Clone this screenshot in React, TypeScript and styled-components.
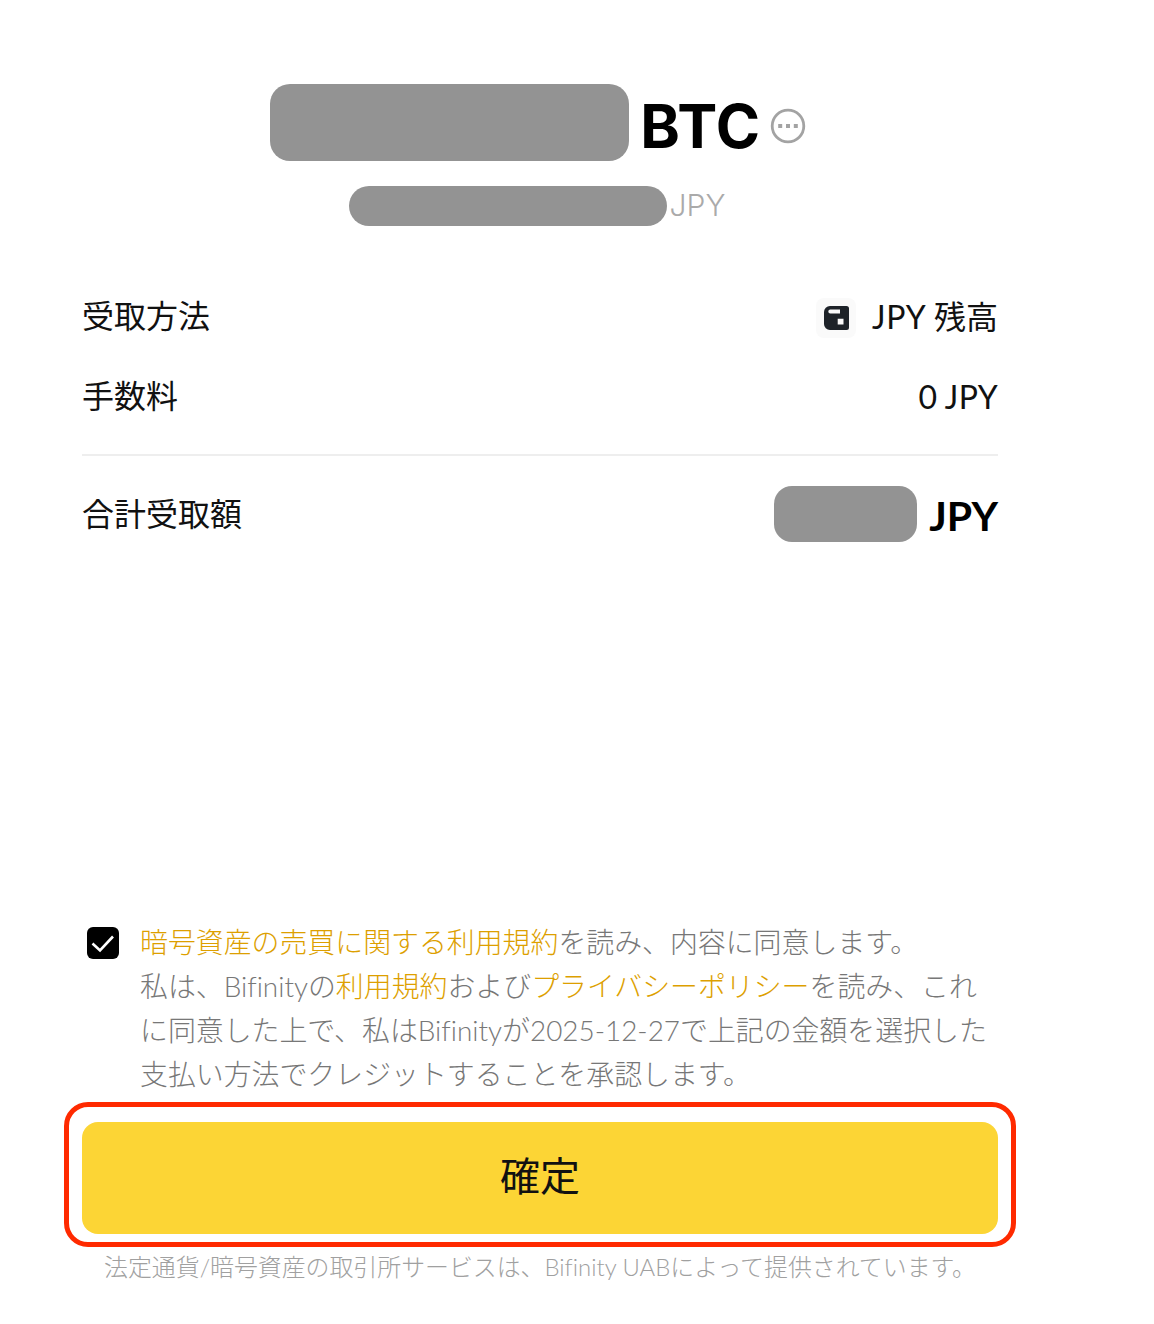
import React from 'react';
import styled, { createGlobalStyle } from 'styled-components';

const Global = createGlobalStyle`
  html, body { margin: 0; padding: 0; background: #fff; }
  body {
    font-family: Lato, "Noto Sans CJK JP", sans-serif;
    font-variant-ligatures: none;
    color: #111;
  }
`;

const Page = styled.div`
  width: 916px;
  height: 1324px;
  box-sizing: border-box;
  margin-left: 82px;
  padding-top: 84px;
  display: flex;
  flex-direction: column;
`;

const Redacted = styled.div<{ $w: number; $h: number; $r: number }>`
  width: ${p => p.$w}px;
  height: ${p => p.$h}px;
  border-radius: ${p => p.$r}px;
  background: #939393;
  flex: none;
`;

const TitleRow = styled.div`
  display: flex;
  align-items: center;
  justify-content: center;
  padding-right: 4px;
  height: 77px;
`;

const Coin = styled.div`
  font-family: Inter, sans-serif;
  font-size: 60px;
  font-weight: 700;
  letter-spacing: 0.5px;
  color: #000;
  margin-left: 11px;
  padding-top: 8px;
  line-height: 77px;
`;

const InfoIcon = styled.svg`
  width: 36px;
  height: 36px;
  margin-left: 9px;
  margin-top: 6px;
  flex: none;
`;

const SubRow = styled.div`
  display: flex;
  align-items: center;
  justify-content: center;
  height: 40px;
  margin-top: 25px;
  padding-right: 6px;
`;

const SubUnit = styled.div`
  font-family: Inter, sans-serif;
  font-size: 30px;
  font-weight: 300;
  color: #aaaaaa;
  margin-left: 3px;
  margin-bottom: 2px;
`;

const Rows = styled.div`
  margin-top: 70px;
  display: flex;
  flex-direction: column;
`;

const Row = styled.div<{ $h: number; $gap?: number }>`
  display: flex;
  align-items: center;
  justify-content: space-between;
  height: ${p => p.$h}px;
  margin-top: ${p => p.$gap ?? 0}px;
  font-size: 32px;
  font-weight: 400;
  color: #111;
`;

const Label = styled.span<{ $lift: number }>`
  margin-bottom: ${p => p.$lift}px;
`;

const Value = styled.div`
  display: flex;
  align-items: center;
`;

const ValueText = styled.span<{ $lift: number }>`
  margin-bottom: ${p => p.$lift}px;
`;

const Unit = styled.span<{ $spacing: number }>`
  letter-spacing: ${p => p.$spacing}px;
`;

const MethodIcon = styled.div`
  width: 40px;
  height: 40px;
  border-radius: 8px;
  background: #fafafa;
  display: flex;
  align-items: center;
  justify-content: center;
  margin-right: 16px;
`;

const Divider = styled.div`
  height: 2px;
  background: #eeeeee;
  margin-top: 35px;
  margin-bottom: 30px;
`;

const TotalUnit = styled.div`
  font-size: 41px;
  font-weight: 700;
  color: #000;
  margin-left: 12px;
  margin-top: 2px;
`;

const Agreement = styled.div`
  margin-top: auto;
  display: flex;
  align-items: flex-start;
  padding-left: 5px;
`;

const Check = styled.div`
  width: 32px;
  height: 32px;
  border-radius: 6px;
  background: #000;
  flex: none;
  margin-top: 7px;
  margin-right: 21px;
  display: flex;
  align-items: center;
  justify-content: center;
`;

const Legal = styled.div`
  font-size: 27.9px;
  line-height: 44px;
  font-weight: 300;
  color: #777777;
  white-space: nowrap;
`;

const Accent = styled.span`
  color: #dd9f00;
`;

const ButtonFrame = styled.div`
  position: relative;
  margin-top: 26px;
`;

const Confirm = styled.button`
  display: block;
  width: 100%;
  height: 112px;
  border: none;
  border-radius: 16px;
  background: #fcd535;
  color: #111;
  font-family: inherit;
  font-size: 40px;
  font-weight: 400;
  padding: 0 0 8px;
`;

const Highlight = styled.div`
  position: absolute;
  left: -18px;
  right: -18px;
  top: -20px;
  bottom: -13px;
  border: 5px solid #ff2a00;
  border-radius: 24px;
  box-sizing: border-box;
  pointer-events: none;
`;

const Footer = styled.div`
  margin-top: 14px;
  margin-bottom: 38px;
  text-align: center;
  font-size: 23.9px;
  line-height: 38px;
  font-weight: 300;
  color: #a0a0a0;
`;

export default function App() {
  return (
    <>
      <Global />
      <Page>
        <TitleRow>
          <Redacted $w={359} $h={77} $r={20} />
          <Coin>BTC</Coin>
          <InfoIcon viewBox="0 0 36 36" fill="none">
            <circle cx="18" cy="18" r="15.8" stroke="#a3a3a3" strokeWidth="2.8" />
            <rect x="8.2" y="16" width="4" height="4" fill="#a3a3a3" />
            <rect x="16" y="16" width="4" height="4" fill="#a3a3a3" />
            <rect x="23.8" y="16" width="4" height="4" fill="#a3a3a3" />
          </InfoIcon>
        </TitleRow>
        <SubRow>
          <Redacted $w={318} $h={40} $r={20} />
          <SubUnit>JPY</SubUnit>
        </SubRow>
        <Rows>
          <Row $h={44}>
            <Label $lift={9}>受取方法</Label>
            <Value>
              <MethodIcon>
                <svg width="25" height="24" viewBox="0 0 25 24">
                  <path
                    fillRule="evenodd"
                    fill="#1e2329"
                    d="M6 0H22.5A2.5 2.5 0 0 1 25 2.5V21.5A2.5 2.5 0 0 1 22.5 24H6A6 6 0 0 1 0 18V6A6 6 0 0 1 6 0ZM6.3 3.5A2 2 0 0 0 6.3 7.5H16V3.5ZM13.7 12.7V18.5H19.5V12.7Z"
                  />
                </svg>
              </MethodIcon>
              <ValueText $lift={6}>
                <Unit $spacing={0.7}>JPY </Unit>残高
              </ValueText>
            </Value>
          </Row>
          <Row $h={44} $gap={35}>
            <Label $lift={6}>手数料</Label>
            <Value>
              <ValueText $lift={2}>
                <Unit $spacing={0.3}>0 JPY</Unit>
              </ValueText>
            </Value>
          </Row>
          <Divider />
          <Row $h={56}>
            <Label $lift={4}>合計受取額</Label>
            <Value>
              <Redacted $w={143} $h={56} $r={18} />
              <TotalUnit>JPY</TotalUnit>
            </Value>
          </Row>
        </Rows>
        <Agreement>
          <Check>
            <svg width="24" height="24" viewBox="0 0 24 24" fill="none">
              <path d="M1.5 12.5L9 19.5L22 5.5" stroke="#fff" strokeWidth="2.6" />
            </svg>
          </Check>
          <Legal>
            <Accent>暗号資産の売買に関する利用規約</Accent>を読み、内容に同意します。
            <br />
            私は、Bifinityの<Accent>利用規約</Accent>および<Accent>プライバシーポリシー</Accent>を読み、これ
            <br />
            に同意した上で、私はBifinityが2025-12-27で上記の金額を選択した
            <br />
            支払い方法でクレジットすることを承認します。
          </Legal>
        </Agreement>
        <ButtonFrame>
          <Confirm>確定</Confirm>
          <Highlight />
        </ButtonFrame>
        <Footer>法定通貨/暗号資産の取引所サービスは、Bifinity UABによって提供されています。</Footer>
      </Page>
    </>
  );
}
